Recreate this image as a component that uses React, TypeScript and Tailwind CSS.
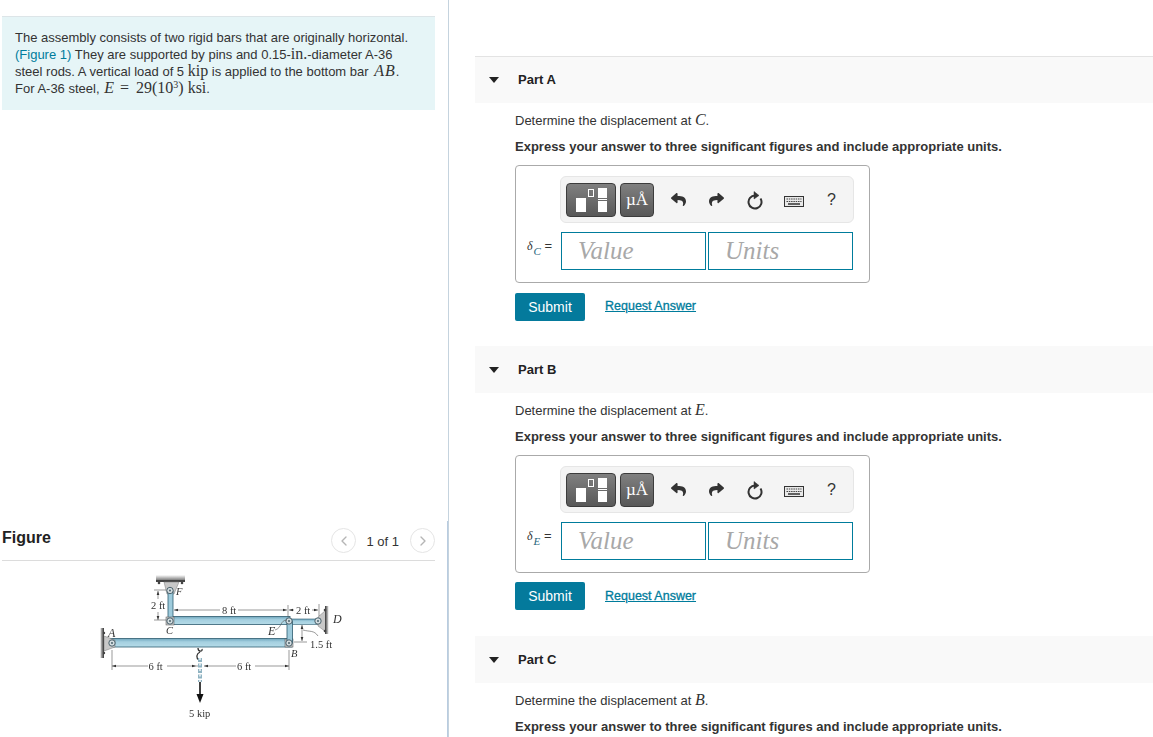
import { ChevronLeft, ChevronRight } from "lucide-react";
import { FaReply, FaShare } from "react-icons/fa";

function MathVar({ children }: { children: string }) {
  return <span className="[font-family:'Liberation_Serif',serif] text-[16px] italic">{children}</span>;
}

function MathText({ children }: { children: string }) {
  return <span className="[font-family:'Liberation_Serif',serif] text-[16px]">{children}</span>;
}

function Figure() {
  const line = "#2f5c70";
  const dim = "#555";
  return (
    <svg width="260" height="160" viewBox="0 0 260 160" className="block blur-[0.3px]">
      <defs>
        <linearGradient id="ceil" x1="0" y1="0" x2="0" y2="1">
          <stop offset="0" stopColor="#fff" />
          <stop offset="1" stopColor="#666" />
        </linearGradient>
        <linearGradient id="wall-l" x1="0" y1="0" x2="1" y2="0">
          <stop offset="0" stopColor="#ccc" />
          <stop offset="1" stopColor="#333" />
        </linearGradient>
        <linearGradient id="wall-r" x1="0" y1="0" x2="1" y2="0">
          <stop offset="0" stopColor="#333" />
          <stop offset="1" stopColor="#ddd" />
        </linearGradient>
        <linearGradient id="bar" x1="0" y1="0" x2="0" y2="1">
          <stop offset="0" stopColor="#6fa6bd" />
          <stop offset="0.4" stopColor="#a5d0e0" />
          <stop offset="1" stopColor="#b5dbe8" />
        </linearGradient>
      </defs>

      {/* ceiling + F */}
      <rect x="66" y="5" width="29" height="6" fill="url(#ceil)" />
      <rect x="66" y="10" width="29" height="2" fill="#444" />
      <polygon points="74,12 89,12 84,24 77,24" fill="#c8c8c8" stroke="#777" strokeWidth="0.5" />
      <circle cx="69" cy="13" r="1.3" fill="#444" />
      <circle cx="92" cy="13" r="1.3" fill="#444" />

      {/* bar CD */}
      <rect x="80" y="46.500" width="120" height="8" fill="url(#bar)" stroke={line} strokeWidth="0.8" />
      <rect x="200" y="49" width="30" height="5.500" fill="url(#bar)" stroke={line} strokeWidth="0.6" />
      {/* rod CF */}
      <rect x="78" y="21" width="5" height="30" fill="#9ecbdc" stroke={line} strokeWidth="0.8" />
      <rect x="76" y="47" width="8" height="8" fill="#c9c9c9" stroke="#555" strokeWidth="0.5" />

      {/* wall D */}
      <polygon points="228,47 236,40 236,62 228,56" fill="#c8c8c8" stroke="#777" strokeWidth="0.5" />
      <rect x="235" y="36" width="3.500" height="28" fill="url(#wall-r)" />
      <circle cx="235" cy="40" r="1.300" fill="#444" />
      <circle cx="235" cy="61" r="1.300" fill="#444" />

      {/* bar AB */}
      <rect x="20" y="68.500" width="182" height="8.500" fill="url(#bar)" stroke={line} strokeWidth="0.8" />
      <rect x="195" y="69" width="8" height="8" fill="#c9c9c9" stroke="#555" strokeWidth="0.5" />
      {/* rod EB */}
      <rect x="197" y="51" width="5.500" height="22" fill="#9ecbdc" stroke={line} strokeWidth="0.8" />

      {/* wall A */}
      <polygon points="14,66 25,70 25,77 14,81" fill="#c8c8c8" stroke="#777" strokeWidth="0.5" />
      <rect x="10.500" y="58" width="3.500" height="30" fill="url(#wall-l)" />
      <circle cx="14" cy="63" r="1.200" fill="#444" />
      <circle cx="14" cy="83" r="1.200" fill="#444" />

      {/* pins */}
      {[
        [80, 20.5],
        [80, 51],
        [199, 51],
        [199, 73],
        [228, 51],
        [22, 73],
      ].map(([cx, cy]) => (
        <g key={`${cx}-${cy}`}>
          <circle cx={cx} cy={cy} r="3.2" fill="#d4dde0" stroke="#3c5560" strokeWidth="0.9" />
          <circle cx={cx} cy={cy} r="0.9" fill="#3c5560" />
        </g>
      ))}

      {/* dimensions */}
      <g stroke={dim} strokeWidth="0.6" fill="none">
        <path d="M64 20H76M64 50H76M68 21V29M68 42V50" />
        <path d="M84 40H130M148 40H197M199 40H204M222 40H228" />
        <path d="M198 35V47M229 34V46" />
        <path d="M212 58V71M204 72H217M212 55V58" />
        <path d="M213 60C220 62 224 60 228 66" />
        <path d="M22 80V100M199 80V100" />
        <path d="M22 96H58M77 96H108M114 96H146M165 96H199" />
        <path d="M197 50C190 50 192 58 185 60" />
      </g>
      <g fill="#333">
        <polygon points="84,40 88,38.7 88,41.3" />
        <polygon points="197,40 193,38.7 193,41.3" />
        <polygon points="199,40 203,38.7 203,41.3" />
        <polygon points="228,40 224,38.7 224,41.3" />
        <polygon points="68,21 66.7,25 69.3,25" />
        <polygon points="68,50 66.7,46 69.3,46" />
        <polygon points="22,96 26,94.7 26,97.3" />
        <polygon points="199,96 195,94.7 195,97.3" />
        <polygon points="106,96 102,94.7 102,97.3" />
        <polygon points="114,96 118,94.7 118,97.3" />
        <polygon points="212,55 210.7,59 213.3,59" />
        <polygon points="212,71 210.7,67 213.3,67" />
      </g>

      {/* chain + load */}
      <path d="M108 78C108 82 113 82 112 79M110 82C106 84 106 88 109 90" stroke="#333" strokeWidth="1.300" fill="none" />
      <path d="M110 88V112" stroke="#8fb3c2" strokeWidth="4" strokeDasharray="4 1.500" />
      <path d="M110 88V112" stroke="#fff" strokeWidth="1.300" strokeDasharray="2 3.500" />
      <path d="M110 112V125" stroke="#111" strokeWidth="1.600" />
      <polygon points="110,133 106.500,124 113.500,124" fill="#111" />

      <g className="[font-family:'Liberation_Serif',serif]" fontSize="10.5" fill="#333">
        <text x="61" y="39">2 ft</text>
        <text x="132" y="44">8 ft</text>
        <text x="206" y="44">2 ft</text>
        <text x="220" y="78">1.5 ft</text>
        <text x="58.500" y="99.500">6 ft</text>
        <text x="147" y="99.500">6 ft</text>
        <text x="99" y="147">5 kip</text>
        <g fontStyle="italic">
          <text x="86" y="25">F</text>
          <text x="76" y="64">C</text>
          <text x="243" y="53" fontSize="12">D</text>
          <text x="178" y="65" fontSize="12">E</text>
          <text x="18" y="67" fontSize="12">A</text>
          <text x="201" y="87">B</text>
        </g>
      </g>
    </svg>
  );
}

function Toolbar() {
  return (
    <div className="ml-[44px] flex h-[47px] w-[294px] items-center rounded-md border border-[#e6e6e6] bg-[#f4f4f4] pl-[5px]">
      <div className="flex h-[34px] w-[50px] items-center justify-center gap-[2px] rounded-[4px] border border-[#3c3c3c] bg-gradient-to-b from-[#808080] to-[#585858]">
        <div className="mt-[10px] h-[14px] w-[10px] bg-white" />
        <div className="mb-[14px] h-[8px] w-[6px] border border-white" />
        <div className="ml-[2px] flex flex-col gap-[1px]">
          <div className="h-[10px] w-[9px] bg-white" />
          <div className="h-[1px] w-[9px] bg-white" />
          <div className="h-[11px] w-[9px] bg-white" />
        </div>
      </div>
      <div className="ml-[4px] flex h-[34px] w-[34px] items-center justify-center rounded-[4px] border border-[#3c3c3c] bg-gradient-to-b from-[#808080] to-[#585858] [font-family:'Liberation_Serif',serif] text-[17px] text-white">
        µÅ
      </div>
      <FaReply size={15} color="#333" className="ml-[17px]" />
      <FaShare size={15} color="#333" className="ml-[23px]" />
      <svg width="18" height="20" viewBox="0 0 18 20" className="ml-[22px]" fill="none" stroke="#333" strokeWidth="2">
        <path d="M9 5.500A6.500 6.500 0 1 0 14.500 8.500" />
        <path d="M8 1.500 13 5.500 8 9z" fill="#333" strokeWidth="0.500" />
      </svg>
      <svg width="20" height="11" viewBox="0 0 20 11" className="ml-[20px] mt-[3px]">
        <rect x="0.500" y="0.500" width="19" height="10" fill="#e8e8e8" stroke="#333" />
        <path d="M2.500 3h15M2.500 5.500h15" stroke="#444" strokeDasharray="1.500 0.800" />
        <path d="M4 8h12" stroke="#333" strokeWidth="1.500" />
      </svg>
      <span className="ml-[23px] text-[16px] text-[#333]">?</span>
    </div>
  );
}

interface PartProps {
  label: string;
  point: string;
  symbol: string;
  first?: boolean;
  answer?: boolean;
}

function Part({ label, point, symbol, first, answer = true }: PartProps) {
  return (
    <section className="h-[290px]">
      <div className={`flex h-[47px] items-center bg-[#f9f9f9] pl-[14px] ${first ? "border-t border-[#e3e3e3]" : ""}`}>
        <span className="h-0 w-0 border-x-[5px] border-t-[6px] border-x-transparent border-t-[#222]" />
        <span className="ml-[19px] text-[13px] font-bold text-[#222]">Part {label}</span>
      </div>
      <div className="pl-[40px]">
        <p className="mt-[8px] h-[18px] text-[13px] leading-[18px] text-[#333]">
          Determine the displacement at <MathVar>{point}</MathVar>.
        </p>
        <p className="mt-[9px] h-[18px] text-[13px] font-bold leading-[18px] text-[#333]">
          Express your answer to three significant figures and include appropriate units.
        </p>
        {answer && (
          <>
            <div className="mt-[9px] h-[118px] w-[355px] rounded-[4px] border border-[#aaa] pt-[10px]">
              <Toolbar />
              <div className="mt-[9px] flex items-center">
                <span className="mb-[6px] ml-[11px] w-[34px] text-[13px] leading-none text-[#333]">
                  <span className="[font-family:'Liberation_Serif',serif] text-[12px] italic">δ</span>
                  <span className="ml-[1px] align-[-5px] [font-family:'Liberation_Serif',serif] text-[11px] italic text-[#27657c]">{symbol}</span>{" "}
                  =
                </span>
                <div className="flex h-[38px] w-[145px] items-center border border-[#007c9c] pl-[16px] [font-family:'Liberation_Serif',serif] text-[25px] italic text-[#a8a8a8]">
                  Value
                </div>
                <div className="ml-[2px] flex h-[38px] w-[145px] items-center border border-[#007c9c] pl-[16px] [font-family:'Liberation_Serif',serif] text-[25px] italic text-[#a8a8a8]">
                  Units
                </div>
              </div>
            </div>
            <div className={`flex items-start ${first ? "mt-[10px]" : "mt-[9px]"}`}>
              <button className="h-[28px] w-[70px] rounded-[2px] bg-[#047a9c] text-[14px] text-white">Submit</button>
              <a className={`ml-[20px] text-[12.500px] text-[#007c9c] underline [-webkit-text-stroke:0.3px] ${first ? "mt-[4px]" : "mt-[5px]"}`}>Request Answer</a>
            </div>
          </>
        )}
      </div>
    </section>
  );
}

export default function App() {
  return (
    <div className="flex h-[737px] w-[1153px] overflow-hidden bg-white [font-family:'Liberation_Sans',Arial,sans-serif]">
      <aside className="relative flex h-full w-[449px] flex-col border-r border-[#c5d3de] pl-[2px] pr-[13px] pt-[16px]">
        <div className="h-[94px] border-t border-[#dde5e8] bg-[#e6f5f7] px-[13px] pt-[13px] text-[13px] leading-[16px] text-[#333]">
          <p>The assembly consists of two rigid bars that are originally horizontal.</p>
          <p>
            <span className="text-[#007c9c]">(Figure 1)</span> They are supported by pins and 0.15-<MathText>in.</MathText>
            -diameter A-36
          </p>
          <p>
            steel rods. A vertical load of 5 <MathText>kip</MathText> is applied to the bottom bar{" "}
            <span className="ml-[2px] tracking-[1px]">
              <MathVar>AB</MathVar>
            </span>
            .
          </p>
          <p>
            For A-36 steel,{" "}
            <span className="ml-[1px]">
              <MathVar>E</MathVar>
            </span>
            <span className="ml-[6px]">
              <MathText>=</MathText>
            </span>
            <span className="ml-[7px]">
              <MathText>29(10</MathText>
            </span>
            <sup className="[font-family:'Liberation_Serif',serif] text-[10px] leading-none">3</sup>
            <MathText>) ksi</MathText>.
          </p>
        </div>
        <div className="mt-[415px] flex h-[36px] items-start justify-between border-b border-[#dcdcdc]">
          <span className="pt-[1px] text-[16px] font-bold leading-[24px] text-[#222]">Figure</span>
          <div className="mt-[3px] flex items-center">
            <span className="flex h-[25px] w-[25px] items-center justify-center rounded-full border border-[#e5e5e5] text-[#b5b5b5]">
              <ChevronLeft size={16} />
            </span>
            <span className="ml-[10px] mr-[11px] pt-[3px] text-[13px] text-[#333]">1 of 1</span>
            <span className="flex h-[25px] w-[25px] items-center justify-center rounded-full border border-[#e5e5e5] text-[#b5b5b5]">
              <ChevronRight size={16} />
            </span>
          </div>
        </div>
        <div className="ml-[88px] mt-[9px]">
          <Figure />
        </div>
        <div className="absolute bottom-0 right-0 top-[521px] w-[1px] bg-[#b9cce0]" />
      </aside>
      <main className="flex-1 pl-[26px] pt-[56px]">
        <Part first label="A" point="C" symbol="C" />
        <Part label="B" point="E" symbol="E" />
        <Part label="C" point="B" symbol="B" answer={false} />
      </main>
    </div>
  );
}
